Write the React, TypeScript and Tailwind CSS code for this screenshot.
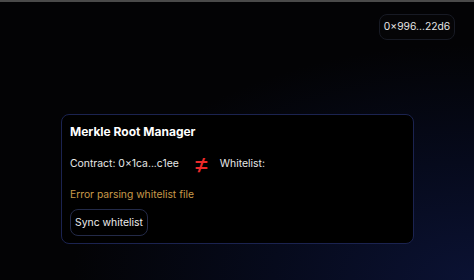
export default function App() {
  return (
    <div
      className="h-[280px] w-[474px] overflow-hidden border-t-2 border-[#4a4a4a] bg-[#030305] bg-[radial-gradient(ellipse_at_100%_100%,#0b1233_0%,#060a1c_30%,#030305_60%)] text-white"
      style={{ fontFamily: "Inter, 'Noto Sans', sans-serif" }}
    >
      {/* Header */}
      <div className="flex justify-end pr-[19px] pt-[12px]">
        <button className="h-[26px] w-[76px] rounded-lg border border-[#171a24] bg-[#050507] text-[10.3px] text-[#e6e6e6]">
          0×996...22d6
        </button>
      </div>

      {/* Merkle card */}
      <div className="ml-[61px] mt-[74px] h-[130px] w-[353px] rounded-lg border border-[#1b2350] bg-black px-[8px] pt-[9px]">
        <h2 className="text-[12px] font-bold leading-[16px] text-white">Merkle Root Manager</h2>
        <div className="mt-[15px] flex h-[18px] items-center text-[10.4px] text-[#e8e8e8]">
          <span>Contract: 0×1ca...c1ee</span>
          <span className="ml-[14px] w-[14px] text-center text-[26px] leading-none text-[#ee2a2a]">≠</span>
          <span className="ml-[13px]">Whitelist:</span>
        </div>
        <p className="mt-[14px] text-[10.3px] leading-[14px] text-[#c89a4a]">Error parsing whitelist file</p>
        <button className="mt-[8px] h-[27px] w-[78px] rounded-lg border border-[#232a48] text-[10.4px] text-[#ececec]">
          Sync whitelist
        </button>
      </div>
    </div>
  );
}
